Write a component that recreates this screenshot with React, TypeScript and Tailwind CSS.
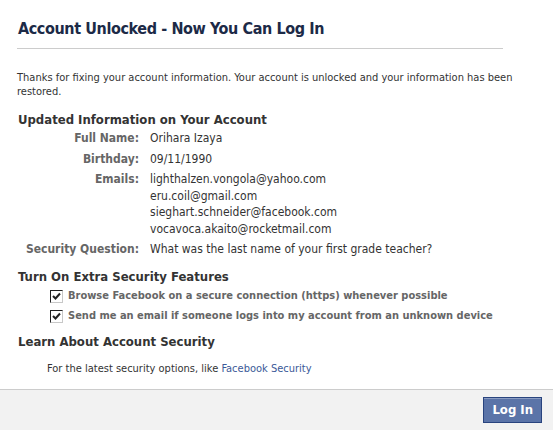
import React from 'react';

const emails = [
  'lighthalzen.vongola@yahoo.com',
  'eru.coil@gmail.com',
  'sieghart.schneider@facebook.com',
  'vocavoca.akaito@rocketmail.com',
];

const Check = () => (
  <span className="mt-[1px] flex h-[13px] w-[13px] shrink-0 items-center justify-center border border-t-[#222] border-l-[#222] border-r-[#c8c8c8] border-b-[#c8c8c8] bg-white">
    <svg width="9" height="9" viewBox="0 0 9 9">
      <path d="M1 4 L3.5 6.5 L8 1.5" fill="none" stroke="#222" strokeWidth="2" />
    </svg>
  </span>
);

export default function App() {
  return (
    <div className="flex h-[430px] w-[553px] flex-col bg-white font-['Tahoma','DejaVu_Sans_Condensed','Liberation_Sans',sans-serif] text-[#333]">
      <div className="flex-1 px-[17px] pt-[19px]">
        <h1 className="mr-[33px] border-b border-[#ccc] pb-[9px] pl-[1px] text-[16px] font-bold leading-[20px] tracking-[-0.4px] text-[#1c2a47]">
          Account Unlocked - Now You Can Log In
        </h1>

        <p className="mt-[22px] text-[11px] leading-[14px]">
          Thanks for fixing your account information. Your account is unlocked and your information has been restored.
        </p>

        <h2 className="mt-[12px] pl-[1px] text-[13px] font-bold leading-[18px]">Updated Information on Your Account</h2>
        <div className="mt-[1px] grid grid-cols-[122px_1fr] gap-x-[11px] gap-y-[4px] text-[12px] leading-[16.5px]">
          <div className="text-right font-bold text-[#666]">Full Name:</div>
          <div>Orihara Izaya</div>
          <div className="text-right font-bold text-[#666]">Birthday:</div>
          <div>09/11/1990</div>
          <div className="text-right font-bold text-[#666]">Emails:</div>
          <div className="flex flex-col">
            {emails.map(e => (
              <span key={e}>{e}</span>
            ))}
          </div>
          <div className="text-right font-bold text-[#666]">Security Question:</div>
          <div>What was the last name of your first grade teacher?</div>
        </div>

        <h2 className="mt-[10px] pl-[1px] text-[13px] font-bold leading-[18px]">Turn On Extra Security Features</h2>
        <div className="mt-[3px] flex flex-col gap-[6px] pl-[33px] text-[11px] font-bold leading-[14px] text-[#666]">
          <label className="flex items-start gap-[5px]">
            <Check />
            <span>Browse Facebook on a secure connection (https) whenever possible</span>
          </label>
          <label className="flex items-start gap-[5px]">
            <Check />
            <span>Send me an email if someone logs into my account from an unknown device</span>
          </label>
        </div>

        <h2 className="mt-[10px] pl-[1px] text-[13px] font-bold leading-[18px]">Learn About Account Security</h2>
        <p className="mt-[11px] pl-[30px] text-[11px] leading-[14px]">
          For the latest security options, like <a className="text-[#3b5998]">Facebook Security</a>
        </p>
      </div>

      <div className="flex h-[41px] items-center justify-end border-t border-[#ccc] bg-[#f2f2f2] pr-[11px]">
        <button className="h-[26px] border border-[#29447e] bg-[#5b74a8] px-[8px] text-[13px] font-bold text-white shadow-[inset_0_1px_0_#8a9cc2]">
          Log In
        </button>
      </div>
    </div>
  );
}
